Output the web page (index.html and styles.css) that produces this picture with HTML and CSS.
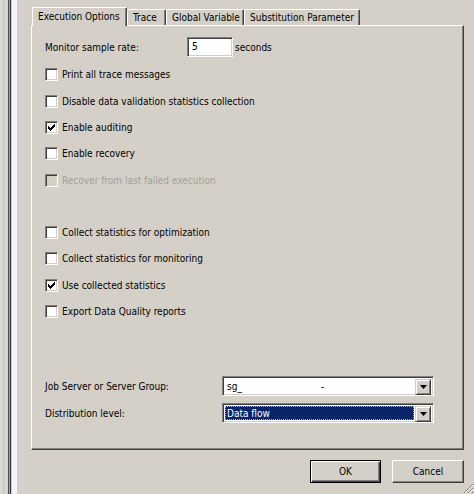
FILE: index.html
```html
<!DOCTYPE html>
<html>
<head>
<meta charset="utf-8">
<title>Execution Properties</title>
<link rel="stylesheet" href="styles.css">
</head>
<body>
<div class="window">
  <div class="frame"></div>
  <div class="main">
    <div class="tabs">
      <div class="tab tab-active tab-exec">Execution Options</div>
      <div class="tab tab-trace">Trace</div>
      <div class="tab tab-global">Global Variable</div>
      <div class="tab tab-subst">Substitution Parameter</div>
    </div>
    <div class="panel">
      <div class="rate-row">
        <span class="rate-label">Monitor sample rate:</span>
        <span class="textbox">5</span>
        <span class="unit">seconds</span>
      </div>
      <div class="checks">
        <div class="check"><span class="box"></span><span>Print all trace messages</span></div>
        <div class="check"><span class="box"></span><span>Disable data validation statistics collection</span></div>
        <div class="check"><span class="box"><svg class="tick" width="7" height="7" viewBox="0 0 7 7"><path d="M0 2h1v1h1v1h1v-1h1v-1h1v-1h1v-1h1v3h-1v1h-1v1h-1v1h-1v1h-1v-1h-1v-1h-1v-1h-1z" fill="#000"/></svg></span><span>Enable auditing</span></div>
        <div class="check"><span class="box"></span><span>Enable recovery</span></div>
        <div class="check check-disabled"><span class="box"></span><span>Recover from last failed execution</span></div>
        <div class="check-spacer"></div>
        <div class="check"><span class="box"></span><span>Collect statistics for optimization</span></div>
        <div class="check"><span class="box"></span><span>Collect statistics for monitoring</span></div>
        <div class="check"><span class="box"><svg class="tick" width="7" height="7" viewBox="0 0 7 7"><path d="M0 2h1v1h1v1h1v-1h1v-1h1v-1h1v-1h1v3h-1v1h-1v1h-1v1h-1v1h-1v-1h-1v-1h-1v-1h-1z" fill="#000"/></svg></span><span>Use collected statistics</span></div>
        <div class="check"><span class="box"></span><span>Export Data Quality reports</span></div>
      </div>
      <div class="fields">
        <span class="field-label">Job Server or Server Group:</span>
        <div class="combo">
          <span class="combo-value">sg_<span class="redact">-</span></span>
          <span class="combo-btn"><svg width="7" height="4" viewBox="0 0 7 4"><path d="M0 0h7L3.5 4z" fill="#000"/></svg></span>
        </div>
        <span class="field-label">Distribution level:</span>
        <div class="combo">
          <span class="combo-value combo-selected">Data flow</span>
          <span class="combo-btn"><svg width="7" height="4" viewBox="0 0 7 4"><path d="M0 0h7L3.5 4z" fill="#000"/></svg></span>
        </div>
      </div>
    </div>
    <div class="buttons">
      <button class="btn btn-default">OK</button>
      <button class="btn">Cancel</button>
    </div>
  </div>
  <svg class="grip" width="11" height="11" viewBox="0 0 11 11">
    <path d="M10 1L1 10M10 5L5 10M10 9L9 10" stroke="#808080" stroke-width="1"/>
    <path d="M10 2L2 10M10 6L6 10" stroke="#ffffff" stroke-width="1"/>
  </svg>
</div>
</body>
</html>
```

FILE: styles.css
```css
html, body {
  margin: 0;
  padding: 0;
}

body {
  background: #d4d0c8;
  font-family: "DejaVu Sans Condensed", "DejaVu Sans", sans-serif;
  font-stretch: condensed;
  font-size: 10px;
  color: #000;
}

.window {
  position: relative;
  display: flex;
  width: 474px;
  height: 494px;
  overflow: hidden;
}

.frame {
  flex: none;
  width: 18px;
  background: linear-gradient(to right,
    #dcdad6 0 3px,
    #c6c4c0 3px 4px,
    #d8d6d2 4px 8px,
    #4e4e4e 8px 9px,
    #9a9a9a 9px 10px,
    #3c3c3c 10px 11px,
    #c8c8d4 11px 12px,
    #f4f4fc 12px 17px,
    #d4d0c8 17px 18px);
}

.main {
  flex: 1;
  min-width: 0;
  display: flex;
  flex-direction: column;
  padding: 7px 10px 0 13px;
}

/* Tabs */
.tabs {
  display: flex;
  align-items: flex-end;
  height: 19px;
  margin-left: 1px;
}

.tab {
  box-sizing: border-box;
  height: 16px;
  margin-bottom: 1px;
  padding: 1px 0 0 5px;
  border-top: 1px solid #fff;
  border-left: 1px solid #fff;
  border-right: 1px solid #404040;
  border-radius: 2px 2px 0 0;
  box-shadow: inset -1px 0 #808080;
  white-space: nowrap;
  line-height: 13px;
}

.tab-active {
  position: relative;
  z-index: 1;
  height: 19px;
  margin-bottom: 0;
  padding-top: 2px;
  background: #d4d0c8;
}

.tab-exec { width: 95px; }
.tab-trace { width: 39px; }
.tab-global { width: 78px; }
.tab-subst { width: 116px; }

/* Panel */
.panel {
  box-sizing: border-box;
  height: 425px;
  margin-top: -1px;
  border: 1px solid;
  border-color: #fff #404040 #404040 #fff;
  box-shadow: inset -1px -1px #808080;
  padding: 11px 0 26px 13px;
  display: flex;
  flex-direction: column;
}

.rate-row {
  display: flex;
  align-items: center;
  height: 20px;
}

.rate-label {
  width: 142px;
}

.textbox {
  box-sizing: border-box;
  width: 46px;
  height: 20px;
  padding: 0 4px;
  line-height: 18px;
  background: #fff;
  border: 1px solid;
  border-color: #808080 #fff #fff #808080;
  box-shadow: inset 1px 1px #404040, inset -1px -1px #d4d0c8;
}

.unit {
  margin-left: 2px;
}

/* Checkboxes */
.checks {
  display: flex;
  flex-direction: column;
  margin-top: 4.7px;
}

.check {
  display: flex;
  align-items: center;
  gap: 4px;
  height: 26.3px;
}

.check-spacer {
  height: 26.3px;
}

.box {
  box-sizing: border-box;
  flex: none;
  width: 13px;
  height: 13px;
  display: flex;
  align-items: center;
  justify-content: center;
  background: #fff;
  border: 1px solid;
  border-color: #808080 #fff #fff #808080;
  box-shadow: inset 1px 1px #404040, inset -1px -1px #d4d0c8;
}

.check-disabled {
  color: #a19f9b;
}

.check-disabled .box {
  background: #d4d0c8;
}

/* Combos */
.fields {
  margin-top: auto;
  display: grid;
  grid-template-columns: 177px 212px;
  row-gap: 7px;
  align-items: center;
}

.combo {
  box-sizing: border-box;
  height: 20px;
  display: flex;
  padding: 2px;
  background: #fff;
  border: 1px solid;
  border-color: #808080 #fff #fff #808080;
  box-shadow: inset 1px 1px #404040, inset -1px -1px #d4d0c8;
}

.combo-value {
  flex: 1;
  padding-left: 2px;
  line-height: 16px;
  white-space: nowrap;
}

.redact {
  margin-left: 79px;
}

.combo-selected {
  margin-right: 1px;
  background: #0a246a;
  color: #fff;
  outline: 1px dotted #c9b46a;
  outline-offset: -1px;
}

.combo-btn {
  box-sizing: border-box;
  flex: none;
  width: 16px;
  height: 16px;
  display: flex;
  align-items: center;
  justify-content: center;
  background: #d4d0c8;
  border: 1px solid;
  border-color: #d4d0c8 #404040 #404040 #d4d0c8;
  box-shadow: inset 1px 1px #fff, inset -1px -1px #808080;
}

/* Buttons */
.buttons {
  display: flex;
  justify-content: flex-end;
  gap: 11px;
  margin-top: 10px;
}

.btn {
  box-sizing: border-box;
  width: 72px;
  height: 23px;
  padding: 0;
  font: inherit;
  font-stretch: condensed;
  color: #000;
  background: #d4d0c8;
  border: 1px solid;
  border-color: #fff #404040 #404040 #fff;
  box-shadow: inset -1px -1px #808080;
}

.btn-default {
  width: 71px;
  border: 1px solid #000;
  box-shadow: inset 1px 1px #fff, inset -1px -1px #404040, inset -2px -2px #808080;
}

.grip {
  position: absolute;
  right: 0;
  bottom: 0;
}
```
